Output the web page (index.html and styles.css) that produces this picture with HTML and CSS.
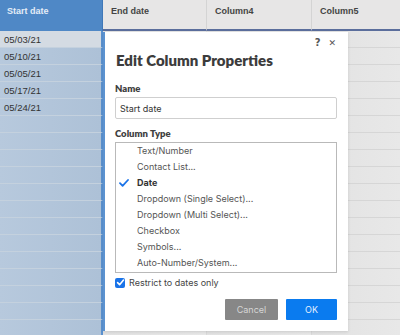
FILE: index.html
```html
<!DOCTYPE html>
<html>
<head>
<meta charset="utf-8">
<link rel="stylesheet" href="styles.css">
</head>
<body>
<div class="sheet">
  <div class="header">
    <div class="hcell sel">Start date</div>
    <div class="hcell">End date</div>
    <div class="hcell">Column4</div>
    <div class="hcell last">Column5</div>
  </div>
  <div class="rows">
    <div class="row first"><div class="cell sel">05/03/21</div><div class="cell"></div><div class="cell"></div><div class="cell last"></div></div>
    <div class="row"><div class="cell sel">05/10/21</div><div class="cell"></div><div class="cell"></div><div class="cell last"></div></div>
    <div class="row"><div class="cell sel">05/05/21</div><div class="cell"></div><div class="cell"></div><div class="cell last"></div></div>
    <div class="row"><div class="cell sel">05/17/21</div><div class="cell"></div><div class="cell"></div><div class="cell last"></div></div>
    <div class="row"><div class="cell sel">05/24/21</div><div class="cell"></div><div class="cell"></div><div class="cell last"></div></div>
    <div class="row"><div class="cell sel"></div><div class="cell"></div><div class="cell"></div><div class="cell last"></div></div>
    <div class="row"><div class="cell sel"></div><div class="cell"></div><div class="cell"></div><div class="cell last"></div></div>
    <div class="row"><div class="cell sel"></div><div class="cell"></div><div class="cell"></div><div class="cell last"></div></div>
    <div class="row"><div class="cell sel"></div><div class="cell"></div><div class="cell"></div><div class="cell last"></div></div>
    <div class="row"><div class="cell sel"></div><div class="cell"></div><div class="cell"></div><div class="cell last"></div></div>
    <div class="row"><div class="cell sel"></div><div class="cell"></div><div class="cell"></div><div class="cell last"></div></div>
    <div class="row"><div class="cell sel"></div><div class="cell"></div><div class="cell"></div><div class="cell last"></div></div>
    <div class="row"><div class="cell sel"></div><div class="cell"></div><div class="cell"></div><div class="cell last"></div></div>
    <div class="row"><div class="cell sel"></div><div class="cell"></div><div class="cell"></div><div class="cell last"></div></div>
    <div class="row"><div class="cell sel"></div><div class="cell"></div><div class="cell"></div><div class="cell last"></div></div>
    <div class="row"><div class="cell sel"></div><div class="cell"></div><div class="cell"></div><div class="cell last"></div></div>
    <div class="row"><div class="cell sel"></div><div class="cell"></div><div class="cell"></div><div class="cell last"></div></div>
    <div class="row"><div class="cell sel"></div><div class="cell"></div><div class="cell"></div><div class="cell last"></div></div>
  </div>

  <div class="dialog">
    <div class="topicons"><span class="help">?</span><span class="close">&#x2715;</span></div>
    <h1 class="title">Edit Column Properties</h1>
    <div class="label">Name</div>
    <div class="input">Start date</div>
    <div class="label type">Column Type</div>
    <ul class="list">
      <li>Text/Number</li>
      <li>Contact List...</li>
      <li class="checked"><svg class="tick" width="10" height="8" viewBox="0 0 10 8"><path d="M1 4.2 L3.6 6.8 L9 1" fill="none" stroke="#1a73e8" stroke-width="1.8" stroke-linecap="round" stroke-linejoin="round"/></svg>Date</li>
      <li>Dropdown (Single Select)...</li>
      <li>Dropdown (Multi Select)...</li>
      <li>Checkbox</li>
      <li>Symbols...</li>
      <li>Auto-Number/System...</li>
    </ul>
    <div class="restrict"><span class="cb"><svg width="9" height="9" viewBox="0 0 9 9"><path d="M1.6 4.6 L3.6 6.7 L7.5 2.1" fill="none" stroke="#fff" stroke-width="1.6" stroke-linecap="round" stroke-linejoin="round"/></svg></span>Restrict to dates only</div>
    <div class="buttons">
      <div class="btn cancel">Cancel</div>
      <div class="btn ok">OK</div>
    </div>
  </div>
</div>
</body>
</html>
```

FILE: styles.css
```css
* { box-sizing: border-box; margin: 0; padding: 0; }
html, body { width: 400px; height: 335px; overflow: hidden; }
body { font-family: "Inter", "DejaVu Sans", sans-serif; background: #e4e4e4; }

.sheet { position: relative; width: 400px; height: 335px; overflow: hidden; }

.header { display: grid; grid-template-columns: 103px 104px 105px 88px; height: 31px; }
.hcell {
  background: #e7e6e6;
  border-bottom: 2px solid #5b6e9c;
  border-right: 1px solid #d4d4d4;
  color: #444;
  font-family: "Liberation Sans", Arial, sans-serif;
  font-size: 9px;
  font-weight: bold;
  padding: 6px 0 0 8px;
  line-height: 11px;
}
.hcell.sel {
  background: #4f88c6;
  color: #e3ecf7;
  border-bottom: none;
  border-right: 1px solid #3f78b8;
  padding-left: 7px;
}
.hcell.last { border-right: none; }

.row { display: grid; grid-template-columns: 103px 104px 105px 88px; height: 17px; }
.cell {
  background: linear-gradient(90deg, #e2e2e2, #e8e8e8);
  border-bottom: 1px solid #d6d6d6;
  border-right: 1px solid #dadada;
}
.cell.last { border-right: none; }
.cell.sel {
  background: linear-gradient(90deg, #b7c9dd, #adc1d7);
  border-bottom: 1px solid #c4d1de;
  border-right: 2px solid #5b92d0;
  color: #333;
  font-family: "Liberation Sans", Arial, sans-serif;
  font-size: 9.5px;
  line-height: 12px;
  padding: 3px 0 0 4px;
}
.row.first .cell.sel { background: #d4dbe3; }

.dialog {
  position: absolute;
  left: 103px;
  top: 32px;
  width: 245px;
  height: 299px;
  background: #fff;
  border-left: 2px solid #5b92d0;
  padding: 0 10px;
  box-shadow: 0 1px 3px rgba(0,0,0,0.12);
}
.topicons {
  display: flex;
  justify-content: flex-end;
  gap: 8px;
  height: 16px;
  padding: 5px 2px 0 0;
  font-family: "DejaVu Sans", sans-serif;
  font-size: 10px;
  font-weight: bold;
  color: #555;
  line-height: 12px;
}
.close { font-size: 9px; }
.title {
  font-family: "Lato", sans-serif;
  font-size: 15px;
  font-weight: 800;
  color: #3c3c3c;
  margin: 1px 0 0 1px;
  height: 22px;
  line-height: 22px;
}
.label {
  font-family: "Lato", sans-serif;
  font-size: 9.5px;
  font-weight: 800;
  color: #3f3f3f;
  margin-top: 12px;
  height: 12px;
  line-height: 12px;
}
.label.type { margin-top: 9px; }
.input {
  margin-top: 1.5px;
  height: 22.5px;
  width: 222px;
  border: 1px solid #cfcfcf;
  border-radius: 2px;
  font-size: 9px;
  line-height: 12px;
  color: #333;
  padding: 5px 0 0 4px;
}
.list {
  list-style: none;
  margin-top: 1.5px;
  width: 222px;
  height: 131px;
  border: 1px solid #b9b9b9;
}
.list li {
  height: 16px;
  line-height: 16px;
  font-size: 9px;
  color: #555;
  padding-left: 21px;
  position: relative;
}
.list li.checked { font-weight: 700; color: #333; }
.tick { position: absolute; left: 3px; top: 4px; }
.restrict {
  display: flex;
  align-items: center;
  gap: 4px;
  margin-top: 3px;
  height: 14px;
  font-size: 9px;
  color: #444;
}
.cb {
  width: 10px;
  height: 10px;
  border-radius: 2px;
  background: #1a73e8;
  display: flex;
  align-items: center;
  justify-content: center;
}
.buttons {
  display: flex;
  justify-content: flex-end;
  gap: 8px;
  margin-top: 9.5px;
  width: 222px;
}
.btn {
  height: 21px;
  line-height: 21px;
  text-align: center;
  font-size: 9px;
  border-radius: 1px;
}
.cancel { width: 53px; background: #878787; color: #d6d6d6; }
.ok { width: 51px; background: #0a7bef; color: #e4efff; }
```
